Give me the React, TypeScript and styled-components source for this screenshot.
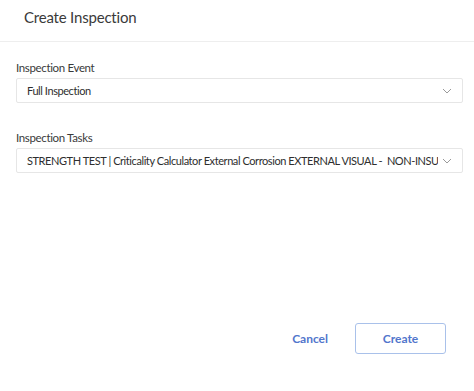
import { FC } from "react";
import styled, { createGlobalStyle } from "styled-components";

const GlobalStyle = createGlobalStyle`
  html, body {
    margin: 0;
    padding: 0;
    background: #ffffff;
  }
  body {
    font-family: "Lato", "Noto Sans", sans-serif;
    color: #333;
  }
`;

type SelectProps = {
  label: string;
  value: string;
};

const Chevron: FC = () => (
  <svg width="10" height="6" viewBox="0 0 10 6" fill="none">
    <path d="M1 1l4 4 4-4" stroke="#9a9a9a" strokeWidth="1" />
  </svg>
);

const SelectField: FC<SelectProps> = ({ label, value }) => (
  <SField>
    <SLabel>{label}</SLabel>
    <SSelect>
      <SValue>{value}</SValue>
      <Chevron />
    </SSelect>
  </SField>
);

export default function App() {
  return (
    <>
      <GlobalStyle />
      <SDialog>
        <SHeader>
          <STitle>Create Inspection</STitle>
        </SHeader>
        <SBody>
          <SelectField label="Inspection Event" value="Full Inspection" />
          <SelectField
            label="Inspection Tasks"
            value="STRENGTH TEST | Criticality Calculator External Corrosion EXTERNAL VISUAL -  NON-INSULATED"
          />
        </SBody>
        <SFooter>
          <SLinkButton>Cancel</SLinkButton>
          <SOutlineButton>Create</SOutlineButton>
        </SFooter>
      </SDialog>
    </>
  );
}

const SDialog = styled.div`
  width: 474px;
  height: 391px;
  display: flex;
  flex-direction: column;
  background: #fff;
`;

const SHeader = styled.div`
  height: 42px;
  border-bottom: 1px solid #eeeeee;
  padding: 0 24px;
  display: flex;
  align-items: center;
  box-sizing: border-box;
`;

const STitle = styled.h1`
  margin: 0;
  margin-top: -7px;
  font-size: 15px;
  font-weight: 400;
  letter-spacing: -0.2px;
  color: #3a3a3a;
`;

const SBody = styled.div`
  flex: 1;
  padding: 18px 11px 0 16px;
  display: flex;
  flex-direction: column;
  gap: 27px;
`;

const SField = styled.div`
  display: flex;
  flex-direction: column;
  gap: 2px;
`;

const SLabel = styled.label`
  font-size: 11.5px;
  letter-spacing: -0.35px;
  color: #3a3a3a;
  line-height: 16px;
`;

const SSelect = styled.div`
  height: 25px;
  box-sizing: border-box;
  border: 1px solid #e6e6e6;
  border-radius: 2px;
  display: flex;
  align-items: center;
  padding: 0 10px 0 10px;
  gap: 4px;
  svg {
    flex-shrink: 0;
  }
`;

const SValue = styled.span`
  flex: 1;
  font-size: 11px;
  letter-spacing: -0.42px;
  color: #2e2e2e;
  white-space: pre;
  overflow: hidden;
`;

const SFooter = styled.div`
  display: flex;
  justify-content: flex-end;
  align-items: center;
  gap: 27px;
  padding: 0 28px 37px 0;
`;

const SLinkButton = styled.button`
  background: none;
  border: none;
  padding: 0;
  font-family: inherit;
  font-size: 12px;
  font-weight: 700;
  color: #5276cc;
  cursor: pointer;
`;

const SOutlineButton = styled.button`
  width: 91px;
  height: 31px;
  background: #fff;
  border: 1px solid #a9c1ea;
  border-radius: 3px;
  font-family: inherit;
  font-size: 12px;
  font-weight: 700;
  color: #5276cc;
  cursor: pointer;
`;
